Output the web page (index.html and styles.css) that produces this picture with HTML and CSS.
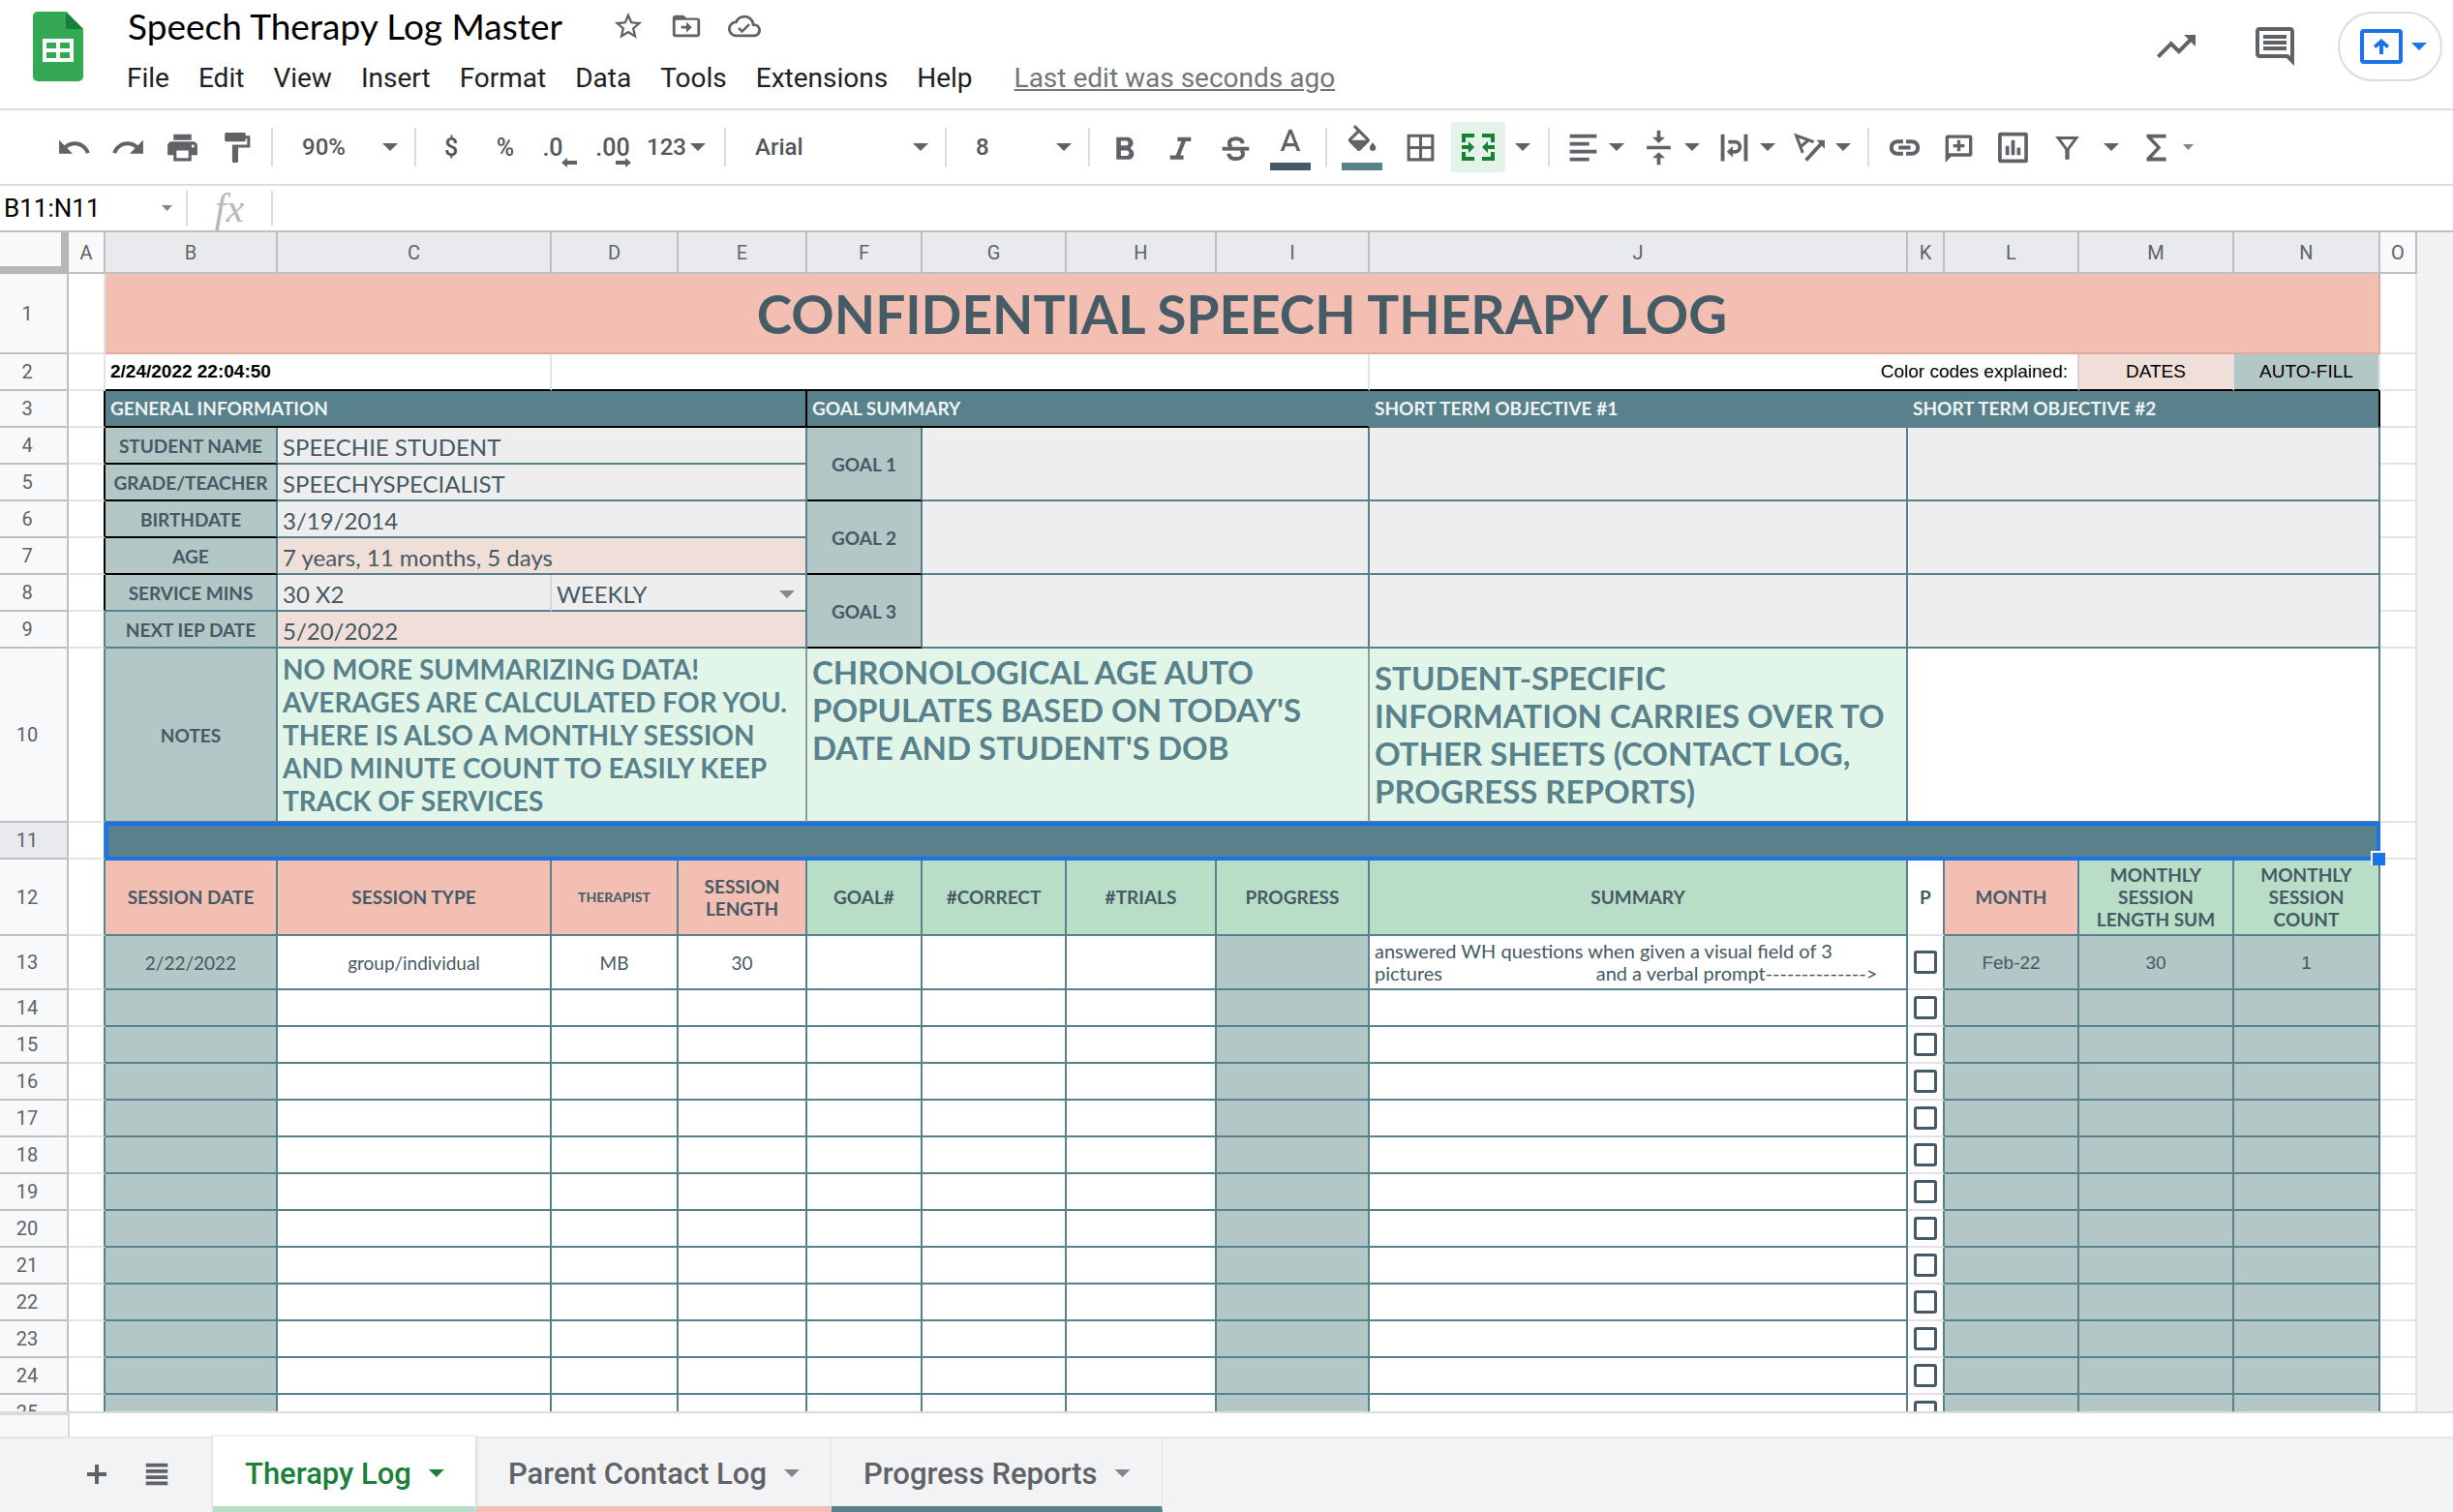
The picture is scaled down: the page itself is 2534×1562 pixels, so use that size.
FILE: index.html
```html
<!DOCTYPE html>
<html lang="en">
<head>
<meta charset="utf-8">
<title>Speech Therapy Log Master</title>
<link rel="stylesheet" href="styles.css">
</head>
<body>
<header class="header">
  <svg class="logo" viewBox="0 0 52 72" aria-hidden="true"><path fill="#34a853" d="M5 0h29l18 18v49a5 5 0 0 1-5 5H5a5 5 0 0 1-5-5V5a5 5 0 0 1 5-5z"/><path fill="#188038" d="M34 0l18 18H34z"/><path fill="#fff" d="M10 28h32v24H10z"/><path fill="#34a853" d="M14 32h10v6H14zM28 32h10v6H28zM14 42h10v6H14zM28 42h10v6H28z"/></svg>
  <div class="doc">
    <div class="doc-row">
      <h1 class="doc-title">Speech Therapy Log Master</h1>
      <button class="icon-btn" aria-label="Star"><svg viewBox="0 0 24 24"><path d="M22 9.240l-7.190-.62L12 2 9.190 8.630 2 9.240l5.460 4.730L5.820 21 12 17.270 18.180 21l-1.630-7.030L22 9.240zM12 15.400l-3.760 2.270 1-4.280-3.320-2.880 4.380-.38L12 6.100l1.710 4.040 4.380.38-3.320 2.880 1 4.280L12 15.400z"/></svg></button>
      <button class="icon-btn" aria-label="Move"><svg viewBox="0 0 24 24"><path d="M20 6h-8l-2-2H4c-1.100 0-2 .9-2 2v12c0 1.100.9 2 2 2h16c1.100 0 2-.9 2-2V8c0-1.100-.9-2-2-2zm0 12H4V7.500h16V18z"/><path d="M12 16.800l4-4-4-4v3H8.200v2H12z"/></svg></button>
      <button class="icon-btn" aria-label="Saved to Drive"><svg viewBox="0 0 24 24"><path d="M19.350 10.040A7.490 7.490 0 0 0 12 4C9.110 4 6.600 5.640 5.350 8.040A5.994 5.994 0 0 0 0 14c0 3.310 2.690 6 6 6h13c2.760 0 5-2.240 5-5 0-2.640-2.050-4.780-4.650-4.960zM19 18H6c-2.210 0-4-1.790-4-4 0-2.050 1.530-3.760 3.560-3.970l1.070-.11.500-.95A5.469 5.469 0 0 1 12 6c2.620 0 4.880 1.860 5.390 4.430l.3 1.500 1.530.11A2.980 2.980 0 0 1 22 15c0 1.650-1.350 3-3 3z"/><path d="M10.300 17.200l-3.200-3.200 1.300-1.300 1.900 1.900 4.600-4.600 1.300 1.300z"/></svg></button>
    </div>
    <nav class="menu">
      <button>File</button><button>Edit</button><button>View</button><button>Insert</button><button>Format</button><button>Data</button><button>Tools</button><button>Extensions</button><button>Help</button>
      <a class="last-edit" href="#history">Last edit was seconds ago</a>
    </nav>
  </div>
  <div class="actions">
    <button class="action-btn" aria-label="Activity"><svg viewBox="0 0 24 24"><path d="M16 6l2.290 2.290-4.880 4.880-4-4L2 16.590 3.410 18l6-6 4 4 6.300-6.290L22 12V6z"/></svg></button>
    <button class="action-btn" aria-label="Comments"><svg viewBox="0 0 24 24"><path d="M21.990 4c0-1.100-.89-2-1.990-2H4c-1.100 0-2 .9-2 2v12c0 1.100.9 2 2 2h14l4 4-.01-18zM20 4v13.170L18.830 16H4V4h16zM6 12h12v2H6zm0-3h12v2H6zm0-3h12v2H6z"/></svg></button>
    <button class="present" aria-label="Present"><svg class="present-icon" viewBox="0 0 44 36"><path fill="none" stroke="#1a73e8" stroke-width="4" d="M4 2h36a2 2 0 0 1 2 2v28a2 2 0 0 1-2 2H4a2 2 0 0 1-2-2V4a2 2 0 0 1 2-2z"/><path fill="#1a73e8" d="M20 26V17l-4 3-2-3 8-7 8 7-2 3-4-3v9z"/></svg><span class="caret"></span></button>
  </div>
</header>

<div class="toolbar" role="toolbar">
  <div class="group">
    <button class="tool" aria-label="Undo"><svg viewBox="0 0 24 24"><path d="M12.500 8c-2.650 0-5.050.99-6.900 2.600L2 7v9h9l-3.620-3.620c1.390-1.160 3.160-1.880 5.120-1.880 3.540 0 6.550 2.310 7.600 5.500l2.370-.78C21.080 11.030 17.150 8 12.500 8z"/></svg></button>
    <button class="tool" aria-label="Redo"><svg viewBox="0 0 24 24"><path d="M18.400 10.600C16.550 8.990 14.150 8 11.500 8c-4.650 0-8.580 3.030-9.960 7.220L3.900 16a8.002 8.002 0 0 1 7.600-5.500c1.950 0 3.730.72 5.120 1.880L13 16h9V7l-3.600 3.600z"/></svg></button>
    <button class="tool" aria-label="Print"><svg viewBox="0 0 24 24"><path d="M19 8H5c-1.660 0-3 1.340-3 3v6h4v4h12v-4h4v-6c0-1.660-1.340-3-3-3zm-3 11H8v-5h8v5zm3-7c-.55 0-1-.45-1-1s.45-1 1-1 1 .45 1 1-.45 1-1 1zm-1-9H6v4h12V3z"/></svg></button>
    <button class="tool" aria-label="Paint format"><svg viewBox="0 0 24 24"><path d="M18 4V3c0-.55-.45-1-1-1H5c-.55 0-1 .45-1 1v4c0 .55.45 1 1 1h12c.55 0 1-.45 1-1V6h1v4H9v11c0 .55.45 1 1 1h2c.55 0 1-.45 1-1v-9h8V4h-3z"/></svg></button>
  </div>
  <div class="group"><button class="pick">90%<span class="caret"></span></button></div>
  <div class="group">
    <button class="tool">$</button>
    <button class="tool">%</button>
    <button class="tool dec dec-less">.0<svg class="dec-arrow" viewBox="0 0 16 10"><path d="M6 0v3h10v4H6v3L0 5z"/></svg></button>
    <button class="tool dec">.00<svg class="dec-arrow" viewBox="0 0 16 10"><path d="M10 0v3H0v4h10v3l6-5z"/></svg></button>
    <button class="drop number">123<span class="caret"></span></button>
  </div>
  <div class="group"><button class="pick pick-font">Arial<span class="caret"></span></button></div>
  <div class="group"><button class="pick">8<span class="caret"></span></button></div>
  <div class="group group-loose">
    <button class="tool" aria-label="Bold"><svg viewBox="0 0 24 24"><path d="M15.600 11.790c.97-.67 1.650-1.770 1.650-2.790 0-2.260-1.750-4-4-4H6v15h8.040c2.090 0 3.710-1.700 3.710-3.790 0-1.520-.86-2.820-2.150-3.420zM9 7.500h3.500c.83 0 1.500.67 1.500 1.500s-.67 1.500-1.500 1.500H9v-3zm4 10H9v-3.500h4c.83 0 1.500.92 1.500 1.750s-.67 1.750-1.500 1.750z"/></svg></button>
    <button class="tool" aria-label="Italic"><svg viewBox="0 0 24 24"><path d="M10 5v2.800h2.600L8.900 17.200H5V20h9v-2.800h-2.200L15.500 7.800H19V5z"/></svg></button>
    <button class="tool" aria-label="Strikethrough"><svg viewBox="0 0 24 24"><path d="M3 11.500h18v2.500H3z"/><path fill="none" stroke="#5f6368" stroke-width="2.600" d="M16.700 9.200c-.2-2-2-3.200-4.500-3.200-2.700 0-4.500 1.200-4.500 3 0 1.100.5 1.900 1.500 2.600M7.300 16c.3 2.200 2.200 3.500 4.900 3.500 2.800 0 4.700-1.300 4.700-3.300 0-1-.4-1.800-1.200-2.500"/></svg></button>
    <button class="tool swatch" aria-label="Text color"><svg viewBox="0 0 24 24"><path d="M11 3L5.500 17h2.250l1.120-3h6.250l1.120 3h2.250L13 3h-2zm-1.380 9L12 5.670 14.380 12H9.620z"/></svg><span class="swatch-bar swatch-text"></span></button>
  </div>
  <div class="group group-wide">
    <button class="tool swatch" aria-label="Fill color"><svg viewBox="0 0 24 24"><path d="M16.560 8.940L7.620 0 6.210 1.410l2.380 2.380-5.150 5.150a1.490 1.490 0 0 0 0 2.120l5.500 5.500c.29.290.68.440 1.060.440s.77-.15 1.060-.44l5.500-5.500c.59-.58.59-1.530 0-2.120zM5.210 10L10 5.210 14.790 10H5.210zM19 11.500s-2 2.170-2 3.500c0 1.100.9 2 2 2s2-.9 2-2c0-1.330-2-3.500-2-3.500z"/></svg><span class="swatch-bar swatch-fill"></span></button>
    <button class="tool" aria-label="Borders"><svg viewBox="0 0 24 24"><path d="M3 3v18h18V3H3zm8 16H5v-6h6v6zm0-8H5V5h6v6zm8 8h-6v-6h6v6zm0-8h-6V5h6v6z"/></svg></button>
    <button class="tool tool-on" aria-label="Merge cells"><svg viewBox="0 0 34 28"><path d="M0 0h13v4H4v5H0zM21 0h13v9h-4V4h-9zM0 19h4v5h9v4H0zM30 19h4v9H21v-4h9zM0 12h7V8l6 6-6 6v-4H0zM34 12h-7V8l-6 6 6 6v-4h7z"/></svg></button>
    <button class="tool tool-caret" aria-label="Merge options"><span class="caret"></span></button>
  </div>
  <div class="group">
    <button class="drop" aria-label="Horizontal align"><svg viewBox="0 0 24 24"><path d="M3 3h18v2.500H3zM3 8.200h13v2.500H3zM3 13.400h18v2.500H3zM3 18.600h13v2.500H3z"/></svg><span class="caret"></span></button>
    <button class="drop" aria-label="Vertical align"><svg viewBox="0 0 24 24"><path d="M7.800 19h3v4.500h2.400V19h3L12 15zM16.200 5h-3V.500h-2.400V5h-3L12 9zM4 10.800v2.400h16v-2.400z"/></svg><span class="caret"></span></button>
    <button class="drop" aria-label="Text wrapping"><svg viewBox="0 0 24 24"><path d="M3 3h2.500v18H3zM18.500 3H21v18h-2.500z"/><path d="M8 7h4.500a4.300 4.300 0 0 1 0 9H11v2.500l-4-3.700 4-3.700v2.500h1.500a2 2 0 0 0 0-4.200H8z"/></svg><span class="caret"></span></button>
    <button class="drop" aria-label="Text rotation"><svg viewBox="0 0 24 24"><path fill="none" stroke="#5f6368" stroke-width="2" d="M7.300 15.500L3 4l11.700 4.200M5.800 11.500l5.200-4.500"/><path fill="none" stroke="#5f6368" stroke-width="2.400" d="M9.500 20.500l10-11"/><path d="M16.500 7H22v5.800z"/></svg><span class="caret"></span></button>
  </div>
  <div class="group">
    <button class="tool" aria-label="Insert link"><svg viewBox="0 0 24 24"><path fill="none" stroke="#5f6368" stroke-width="2.600" d="M11 7.900H7.200a4.100 4.100 0 0 0 0 8.200H11M13 7.900h3.800a4.100 4.100 0 0 1 0 8.200H13M8 12h8"/></svg></button>
    <button class="tool" aria-label="Insert comment"><svg viewBox="0 0 24 24"><path d="M19.500 3.500h-15A1.500 1.500 0 0 0 3 5v17l3.800-4h12.700a1.500 1.500 0 0 0 1.500-1.500V5a1.500 1.500 0 0 0-1.500-1.500zm-.7 12.300H5.200V5.700h13.600zM10.900 14.500h2.200v-2.700h2.700V9.700h-2.700V7h-2.200v2.700H8.200v2.100h2.700z"/></svg></button>
    <button class="tool" aria-label="Insert chart"><svg viewBox="0 0 24 24"><path d="M20.500 1.800h-17c-.8 0-1.500.7-1.500 1.500v17.400c0 .8.700 1.500 1.500 1.500h17c.8 0 1.500-.7 1.500-1.500V3.300c0-.8-.7-1.500-1.500-1.500zm-.9 18H4.400V4.200h15.200zM7 10.800h2.400V17H7zM10.800 7h2.400v10h-2.400zM14.600 12H17v5h-2.400z"/></svg></button>
    <button class="tool" aria-label="Create a filter"><svg viewBox="0 0 24 24"><path fill-rule="evenodd" d="M4 4.500h16l-6.600 9V20h-2.800v-6.500zm3.800 2L12 12.300l4.200-5.800z"/></svg></button>
    <button class="tool filter-caret" aria-label="Filter views"><span class="caret"></span></button>
    <button class="tool" aria-label="Functions"><svg viewBox="0 0 24 24"><path d="M18.500 3h-13v2l6.700 7-6.700 7v2h13v-2.500H9.200l6-6.500-6-6.500h9.300z"/></svg></button>
    <span class="caret caret-small"></span>
  </div>
</div>

<div class="formula">
  <label class="name-box"><input class="name-input" aria-label="Name box" value="B11:N11"><span class="caret caret-small"></span></label>
  <span class="fx">fx</span>
  <input class="formula-input" aria-label="Formula">
</div>

<main class="sheet">
<table class="grid">
<colgroup><col class="w-head"><col class="w-a"><col class="w-b"><col class="w-c"><col class="w-d"><col class="w-e"><col class="w-f"><col class="w-g"><col class="w-h"><col class="w-i"><col class="w-j"><col class="w-a"><col class="w-l"><col class="w-m"><col class="w-n"><col class="w-a"></colgroup>
<thead>
<tr class="cols"><th class="corner"></th><th class="off">A</th><th>B</th><th>C</th><th>D</th><th>E</th><th>F</th><th>G</th><th>H</th><th>I</th><th>J</th><th>K</th><th>L</th><th>M</th><th>N</th><th class="off">O</th></tr>
</thead>
<tbody>
<tr class="r-title"><th>1</th><td></td><td colspan="13" class="banner">CONFIDENTIAL SPEECH THERAPY LOG</td><td></td></tr>
<tr class="r-codes"><th>2</th><td></td><td colspan="2" class="plain stamp">2/24/2022 22:04:50</td><td colspan="6" class="plain"></td><td colspan="3" class="plain right nr">Color codes explained:</td><td class="plain center peach">DATES</td><td class="plain center sage">AUTO-FILL</td><td></td></tr>
<tr><th>3</th><td class="kr"></td><td colspan="4" class="section kr kb">GENERAL INFORMATION</td><td colspan="4" class="section tr kb">GOAL SUMMARY</td><td class="section tr tb">SHORT TERM OBJECTIVE #1</td><td colspan="4" class="section kr tb">SHORT TERM OBJECTIVE #2</td><td></td></tr>
<tr><th>4</th><td class="kr"></td><td class="label tr kb">STUDENT NAME</td><td colspan="3" class="value">SPEECHIE STUDENT</td><td rowspan="2" class="label tr kb">GOAL 1</td><td rowspan="2" colspan="3" class="value"></td><td rowspan="2" class="value"></td><td rowspan="2" colspan="4" class="value"></td><td></td></tr>
<tr><th>5</th><td class="kr"></td><td class="label tr kb">GRADE/TEACHER</td><td colspan="3" class="value">SPEECHYSPECIALIST</td><td></td></tr>
<tr><th>6</th><td class="kr"></td><td class="label tr kb">BIRTHDATE</td><td colspan="3" class="value">3/19/2014</td><td rowspan="2" class="label tr kb">GOAL 2</td><td rowspan="2" colspan="3" class="value"></td><td rowspan="2" class="value"></td><td rowspan="2" colspan="4" class="value"></td><td></td></tr>
<tr><th>7</th><td class="kr"></td><td class="label tr kb">AGE</td><td colspan="3" class="value peach">7 years, 11 months, 5 days</td><td></td></tr>
<tr><th>8</th><td class="kr"></td><td class="label tr tb">SERVICE MINS</td><td class="value gr">30 X2</td><td colspan="2" class="value"><div class="choice"><select aria-label="Service frequency"><option>WEEKLY</option></select><span class="caret"></span></div></td><td rowspan="2" class="label tr kb">GOAL 3</td><td rowspan="2" colspan="3" class="value"></td><td rowspan="2" class="value"></td><td rowspan="2" colspan="4" class="value"></td><td></td></tr>
<tr><th>9</th><td class="tr"></td><td class="label tr tb">NEXT IEP DATE</td><td colspan="3" class="value peach">5/20/2022</td><td></td></tr>
<tr class="r-notes"><th>10</th><td class="tr"></td><td class="label tr tb">NOTES</td><td colspan="3" class="note note-md">NO MORE SUMMARIZING DATA!<br>AVERAGES ARE CALCULATED FOR YOU.<br>THERE IS ALSO A MONTHLY SESSION<br>AND MINUTE COUNT TO EASILY KEEP<br>TRACK OF SERVICES</td><td colspan="4" class="note note-lg top">CHRONOLOGICAL AGE AUTO<br>POPULATES BASED ON TODAY'S<br>DATE AND STUDENT'S DOB</td><td class="note note-lg tr">STUDENT-SPECIFIC<br>INFORMATION CARRIES OVER TO<br>OTHER SHEETS (CONTACT LOG,<br>PROGRESS REPORTS)</td><td colspan="4" class="tr tb"></td><td></td></tr>
<tr><th class="on">11</th><td class="tr"></td><td colspan="13" class="section tr tb selected"><span class="selection"><span class="handle"></span></span></td><td></td></tr>
<tr class="r-heads"><th>12</th><td class="tr"></td><td class="head pink">SESSION DATE</td><td class="head pink">SESSION TYPE</td><td class="head pink tiny">THERAPIST</td><td class="head pink">SESSION<br>LENGTH</td><td class="head green">GOAL#</td><td class="head green">#CORRECT</td><td class="head green">#TRIALS</td><td class="head green">PROGRESS</td><td class="head green">SUMMARY</td><td class="head gb">P</td><td class="head pink">MONTH</td><td class="head green">MONTHLY<br>SESSION<br>LENGTH SUM</td><td class="head green">MONTHLY<br>SESSION<br>COUNT</td><td></td></tr>
<tr class="r-first"><th>13</th><td class="tr"></td><td class="cell sage">2/22/2022</td><td class="cell">group/individual</td><td class="cell">MB</td><td class="cell">30</td><td class="cell"></td><td class="cell"></td><td class="cell"></td><td class="cell sage"></td><td class="cell summary">answered WH questions when given a visual field of 3
pictures                               and a verbal prompt--------------&gt;</td><td class="cell gb"><input type="checkbox" aria-label="Row 13"></td><td class="cell sage arial">Feb-22</td><td class="cell sage arial">30</td><td class="cell sage arial">1</td><td></td></tr>
<tr><th>14</th><td class="tr"></td><td class="cell sage"></td><td class="cell"></td><td class="cell"></td><td class="cell"></td><td class="cell"></td><td class="cell"></td><td class="cell"></td><td class="cell sage"></td><td class="cell"></td><td class="cell gb"><input type="checkbox" aria-label="Row 14"></td><td class="cell sage"></td><td class="cell sage"></td><td class="cell sage"></td><td></td></tr>
<tr><th>15</th><td class="tr"></td><td class="cell sage"></td><td class="cell"></td><td class="cell"></td><td class="cell"></td><td class="cell"></td><td class="cell"></td><td class="cell"></td><td class="cell sage"></td><td class="cell"></td><td class="cell gb"><input type="checkbox" aria-label="Row 15"></td><td class="cell sage"></td><td class="cell sage"></td><td class="cell sage"></td><td></td></tr>
<tr><th>16</th><td class="tr"></td><td class="cell sage"></td><td class="cell"></td><td class="cell"></td><td class="cell"></td><td class="cell"></td><td class="cell"></td><td class="cell"></td><td class="cell sage"></td><td class="cell"></td><td class="cell gb"><input type="checkbox" aria-label="Row 16"></td><td class="cell sage"></td><td class="cell sage"></td><td class="cell sage"></td><td></td></tr>
<tr><th>17</th><td class="tr"></td><td class="cell sage"></td><td class="cell"></td><td class="cell"></td><td class="cell"></td><td class="cell"></td><td class="cell"></td><td class="cell"></td><td class="cell sage"></td><td class="cell"></td><td class="cell gb"><input type="checkbox" aria-label="Row 17"></td><td class="cell sage"></td><td class="cell sage"></td><td class="cell sage"></td><td></td></tr>
<tr><th>18</th><td class="tr"></td><td class="cell sage"></td><td class="cell"></td><td class="cell"></td><td class="cell"></td><td class="cell"></td><td class="cell"></td><td class="cell"></td><td class="cell sage"></td><td class="cell"></td><td class="cell gb"><input type="checkbox" aria-label="Row 18"></td><td class="cell sage"></td><td class="cell sage"></td><td class="cell sage"></td><td></td></tr>
<tr><th>19</th><td class="tr"></td><td class="cell sage"></td><td class="cell"></td><td class="cell"></td><td class="cell"></td><td class="cell"></td><td class="cell"></td><td class="cell"></td><td class="cell sage"></td><td class="cell"></td><td class="cell gb"><input type="checkbox" aria-label="Row 19"></td><td class="cell sage"></td><td class="cell sage"></td><td class="cell sage"></td><td></td></tr>
<tr><th>20</th><td class="tr"></td><td class="cell sage"></td><td class="cell"></td><td class="cell"></td><td class="cell"></td><td class="cell"></td><td class="cell"></td><td class="cell"></td><td class="cell sage"></td><td class="cell"></td><td class="cell gb"><input type="checkbox" aria-label="Row 20"></td><td class="cell sage"></td><td class="cell sage"></td><td class="cell sage"></td><td></td></tr>
<tr><th>21</th><td class="tr"></td><td class="cell sage"></td><td class="cell"></td><td class="cell"></td><td class="cell"></td><td class="cell"></td><td class="cell"></td><td class="cell"></td><td class="cell sage"></td><td class="cell"></td><td class="cell gb"><input type="checkbox" aria-label="Row 21"></td><td class="cell sage"></td><td class="cell sage"></td><td class="cell sage"></td><td></td></tr>
<tr><th>22</th><td class="tr"></td><td class="cell sage"></td><td class="cell"></td><td class="cell"></td><td class="cell"></td><td class="cell"></td><td class="cell"></td><td class="cell"></td><td class="cell sage"></td><td class="cell"></td><td class="cell gb"><input type="checkbox" aria-label="Row 22"></td><td class="cell sage"></td><td class="cell sage"></td><td class="cell sage"></td><td></td></tr>
<tr><th>23</th><td class="tr"></td><td class="cell sage"></td><td class="cell"></td><td class="cell"></td><td class="cell"></td><td class="cell"></td><td class="cell"></td><td class="cell"></td><td class="cell sage"></td><td class="cell"></td><td class="cell gb"><input type="checkbox" aria-label="Row 23"></td><td class="cell sage"></td><td class="cell sage"></td><td class="cell sage"></td><td></td></tr>
<tr><th>24</th><td class="tr"></td><td class="cell sage"></td><td class="cell"></td><td class="cell"></td><td class="cell"></td><td class="cell"></td><td class="cell"></td><td class="cell"></td><td class="cell sage"></td><td class="cell"></td><td class="cell gb"><input type="checkbox" aria-label="Row 24"></td><td class="cell sage"></td><td class="cell sage"></td><td class="cell sage"></td><td></td></tr>
<tr><th>25</th><td class="tr"></td><td class="cell sage"></td><td class="cell"></td><td class="cell"></td><td class="cell"></td><td class="cell"></td><td class="cell"></td><td class="cell"></td><td class="cell sage"></td><td class="cell"></td><td class="cell gb"><input type="checkbox" aria-label="Row 25"></td><td class="cell sage"></td><td class="cell sage"></td><td class="cell sage"></td><td></td></tr>
</tbody>
</table>
</main>

<div class="scroll-strip"><span class="scroll-corner"></span></div>

<footer class="tabs">
  <button class="tab-tool" aria-label="Add sheet"><svg viewBox="0 0 24 24"><path d="M20 13.600h-6.400V20h-3.200v-6.400H4v-3.200h6.400V4h3.200v6.400H20z"/></svg></button>
  <button class="tab-tool" aria-label="All sheets"><svg viewBox="0 0 24 24"><path d="M3 3h18v3H3zM3 8h18v3H3zM3 13h18v3H3zM3 18h18v3H3z"/></svg></button>
  <div class="tab-list">
    <button class="tab tab-active">Therapy Log<span class="caret"></span></button>
    <button class="tab tab-pink">Parent Contact Log<span class="caret"></span></button>
    <button class="tab tab-teal">Progress Reports<span class="caret"></span></button>
  </div>
</footer>
</body>
</html>
```
FILE: styles.css
```css
:root {
  --teal: #58818c;
  --slate: #455a64;
  --sage: #b2c7c6;
  --pink: #f4bfb3;
  --peach: #f0ded8;
  --mint: #e1f5e8;
  --green: #b9dec8;
  --icon: #5f6368;
  --line: #dadce0;
  --sheet-font: Lato, sans-serif;
}

* { box-sizing: border-box; }

body {
  margin: 0;
  height: 100vh;
  display: flex;
  flex-direction: column;
  overflow: hidden;
  background: #fff;
  font-family: Roboto, sans-serif;
  color: #202124;
}

button, input, select {
  margin: 0;
  padding: 0;
  border: 0;
  background: none;
  font: inherit;
  color: inherit;
}

svg { display: block; fill: var(--icon); }

.caret {
  flex: none;
  width: 16px;
  height: 8px;
  background: currentColor;
  clip-path: polygon(0 0, 100% 0, 50% 100%);
}
.caret-small { width: 11px; height: 6px; color: #80868b; }

/* header */
.header {
  flex: none;
  display: flex;
  height: 114px;
  padding: 0 11px 0 34px;
  border-bottom: 2px solid var(--line);
}
.logo { width: 52px; height: 72px; margin-top: 12px; }
.doc { margin-left: 30px; }
.doc-row { display: flex; align-items: center; height: 54px; padding-left: 16px; }
.doc-title {
  margin: 0 38px 0 0;
  font-family: Lato, sans-serif;
  font-size: 37px;
  font-weight: 400;
  line-height: 54px;
  color: #000;
}
.icon-btn { width: 60px; display: flex; justify-content: center; }
.icon-btn svg { width: 34px; height: 34px; }
.menu { display: flex; align-items: center; height: 54px; font-size: 28px; line-height: 32px; }
.menu button { padding: 0 15px; }
.last-edit { margin-left: 28px; color: #70757a; font-size: 28px; }
.actions { display: flex; align-items: center; height: 96px; margin-left: auto; }
.action-btn { width: 102px; display: flex; justify-content: center; }
.action-btn svg { width: 48px; height: 48px; }
.present {
  display: flex;
  align-items: center;
  justify-content: center;
  gap: 9px;
  width: 108px;
  height: 72px;
  padding-left: 7px;
  margin-left: 14px;
  border: 2px solid var(--line);
  border-radius: 36px;
  color: #1a73e8;
}
.present-icon { width: 44px; height: 36px; }

/* toolbar */
.toolbar {
  flex: none;
  display: flex;
  align-items: center;
  height: 78px;
  padding-left: 40px;
  border-bottom: 2px solid var(--line);
  color: var(--icon);
}
.group { display: flex; align-items: center; height: 52px; padding: 0 8px; }
.group + .group { position: relative; margin-left: 2px; }
.group + .group::before {
  content: "";
  position: absolute;
  left: -2px;
  top: 6px;
  width: 2px;
  height: 40px;
  background: var(--line);
}
.group-loose { gap: 1px; }
.group-wide { gap: 4px; padding-right: 12px; }
.tool {
  display: flex;
  align-items: center;
  justify-content: center;
  width: 56px;
  height: 52px;
  font-size: 25px;
  font-weight: 500;
  color: #54575b;
}
.tool svg, .drop svg { width: 37px; height: 37px; }
.tool .caret, .drop .caret, .pick .caret { color: var(--icon); }
.tool-on { background: #e3f3e8; border-radius: 2px; }
.tool-on svg { width: 34px; height: 28px; fill: #188038; }
.tool-caret { width: 28px; }
.filter-caret { width: 36px; }
.dec { position: relative; padding-right: 2px; }
.dec-less { padding-right: 14px; }
.tool .dec-arrow { position: absolute; right: 10px; bottom: 5px; width: 16px; height: 10px; }
.swatch { flex-direction: column; justify-content: flex-end; gap: 1px; padding-bottom: 2px; }
.tool.swatch svg { width: 38px; height: 38px; }
.swatch-bar { width: 42px; height: 8px; }
.swatch-text { background: var(--slate); }
.swatch-fill { background: var(--teal); }
.pick {
  display: flex;
  align-items: center;
  justify-content: space-between;
  width: 130px;
  height: 52px;
  padding: 0 9px 0 22px;
  font-size: 24px;
  font-weight: 500;
  color: #54575b;
}
.pick-font { width: 210px; }
.drop { display: flex; align-items: center; gap: 8px; width: 78px; padding-left: 8px; }
.number { gap: 4px; padding-left: 6px; font-size: 24px; font-weight: 500; color: #54575b; }

/* formula bar */
.formula {
  flex: none;
  display: flex;
  align-items: center;
  height: 48px;
  border-bottom: 2px solid #c0c0c0;
}
.name-box { display: flex; align-items: center; width: 194px; height: 36px; padding: 0 14px 0 4px; border-right: 2px solid var(--line); }
.name-input { flex: 1; min-width: 0; font-size: 26px; color: #000; }
.fx {
  width: 88px;
  border-right: 2px solid var(--line);
  text-align: center;
  font: italic 42px/36px "Liberation Serif", serif;
  color: #b4b7bb;
}
.formula-input { flex: 1; height: 40px; }

/* grid */
.sheet { flex: 1; min-height: 0; overflow: hidden; background: #f2f2f2; }
.grid { table-layout: fixed; width: 2497px; border-collapse: separate; border-spacing: 0; }
.w-head { width: 71px; }
.w-a { width: 38px; }
.w-b { width: 178px; }
.w-c { width: 283px; }
.w-d { width: 131px; }
.w-e { width: 133px; }
.w-f { width: 119px; }
.w-g { width: 149px; }
.w-h { width: 155px; }
.w-i { width: 158px; }
.w-j { width: 556px; }
.w-l { width: 139px; }
.w-m { width: 160px; }
.w-n { width: 151px; }

tr { height: 38px; }
.cols { height: 43px; }
.r-title { height: 83px; }
.r-notes { height: 180px; }
.r-heads { height: 79px; }
.r-first { height: 56px; }

th, td {
  padding: 0 5px;
  border: solid #e2e3e3;
  border-width: 0 2px 2px 0;
  background: #fff;
  vertical-align: middle;
  white-space: nowrap;
}
th {
  padding: 0 13px 0 0;
  border-color: #c0c0c0;
  background: #f8f9fa;
  font-size: 20px;
  font-weight: 400;
  line-height: 24px;
  color: #5f6368;
}
.cols th { padding: 0; background: #e8eaed; }
.cols .off { background: #f8f9fa; }
.cols .corner { background: #f8f9fa; border: solid #b7b7b7; border-width: 0 8px 8px 0; }
th.on { background: #e8eaed; }

.banner {
  border-color: #dcaca3;
  background: var(--pink);
  text-align: center;
  font: 700 55px/70px var(--sheet-font);
  color: #455c67;
}
.plain { font: 400 19px/24px "Liberation Sans", Arial, sans-serif; color: #000; border-bottom-color: #000; }
.stamp { font-weight: 700; }
.right { text-align: right; padding-right: 10px; }
.center { text-align: center; }
.section {
  background: var(--teal);
  border-color: var(--teal);
  font: 700 19px/24px var(--sheet-font);
  color: #eef3f3;
}
.label, .head {
  padding: 0;
  text-align: center;
  font: 700 19px/23px var(--sheet-font);
  color: var(--slate);
}
.label { background: var(--sage); }
.value {
  padding-top: 4px;
  border-color: var(--teal);
  background: #eee;
  font: 400 24px/28px var(--sheet-font);
  color: var(--slate);
}
.note { border-color: #8f9c9c; border-bottom-color: var(--teal); background: var(--mint); font-family: var(--sheet-font); font-weight: 700; color: var(--teal); }
.note-md { font-size: 28px; line-height: 34px; }
.note-lg { font-size: 33px; line-height: 39px; }
.top { vertical-align: top; padding-top: 5px; }
.head { border-color: var(--teal); }
.tiny { font-size: 14px; }
.cell {
  border-color: var(--teal);
  text-align: center;
  font: 400 19px/23px var(--sheet-font);
  color: var(--slate);
}
.arial { font-family: "Liberation Sans", Arial, sans-serif; }
.summary { text-align: left; white-space: pre; font-size: 20px; }

.peach { background: var(--peach); }
.sage { background: var(--sage); }
.pink { background: var(--pink); }
.green { background: var(--green); }

.kr { border-right-color: #000; }
.kb { border-bottom-color: #000; }
.tr { border-right-color: var(--teal); }
.tb { border-bottom-color: var(--teal); }
.gr { border-right-color: #d5d7d7; }
.gb { border-bottom-color: #e2e3e3; padding: 0; }
.nr { border-right-color: #e0cfc9; }

.choice { display: flex; align-items: center; padding-right: 6px; }
.choice select { flex: 1; appearance: none; }
.choice .caret { color: #888; }

input[type="checkbox"] {
  appearance: none;
  display: block;
  width: 24px;
  height: 24px;
  margin: 0 auto;
  border: 3px solid var(--slate);
  border-radius: 3px;
  background: #fff;
}

.selected { position: relative; }
.selection { position: absolute; inset: -1px -2px -3px -1px; border: 4px solid #1a73e8; }
.handle {
  position: absolute;
  right: -9px;
  bottom: -9px;
  width: 15px;
  height: 15px;
  border: solid #fff;
  border-width: 2px 0 0 2px;
  background: #1a73e8;
}

/* bottom */
.scroll-strip { flex: none; display: flex; height: 26px; border-top: 2px solid #dadada; background: #fff; }
.scroll-corner { width: 72px; border-top: 2px solid #dadada; border-right: 2px solid #dadada; background: #f8f8f8; }
.tabs {
  flex: none;
  display: flex;
  align-items: stretch;
  height: 78px;
  padding-left: 69px;
  background: #f1f3f4;
  box-shadow: inset 0 2px 1px #e4e6e8;
}
.tab-tool { width: 62px; display: flex; align-items: center; justify-content: center; }
.tab-tool svg { width: 30px; height: 30px; }
.tab-list { display: flex; margin-left: 27px; }
.tab {
  display: flex;
  align-items: center;
  gap: 18px;
  padding: 4px 32px 0 33px;
  border-bottom: 6px solid var(--green);
  border-right: 1px solid #e0e2e4;
  font-size: 31px;
  font-weight: 500;
  color: var(--icon);
}
.tab .caret { color: #80868b; }
.tab-active { background: #fff; color: #188038; box-shadow: 0 0 3px #c4c7ca; }
.tab-active .caret { color: #188038; }
.tab-pink { border-bottom-color: var(--pink); }
.tab-teal { border-bottom-color: var(--teal); }
```
